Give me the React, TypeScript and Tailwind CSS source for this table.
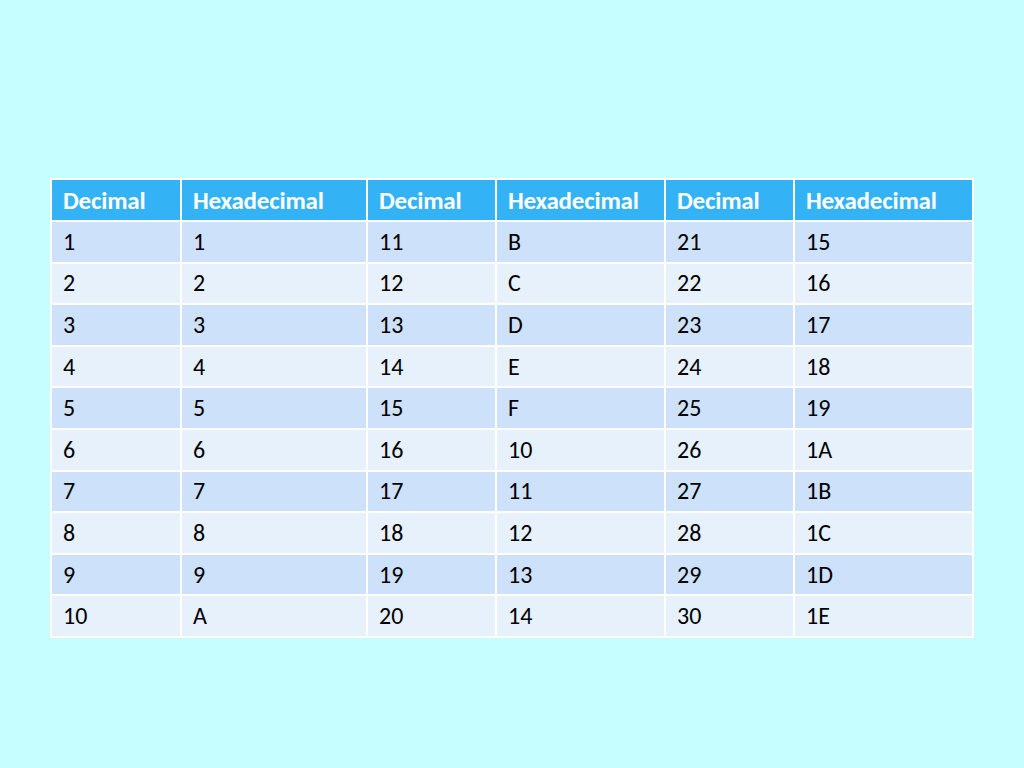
import React from 'react';

const rows: string[][] = [
  ['1', '1', '11', 'B', '21', '15'],
  ['2', '2', '12', 'C', '22', '16'],
  ['3', '3', '13', 'D', '23', '17'],
  ['4', '4', '14', 'E', '24', '18'],
  ['5', '5', '15', 'F', '25', '19'],
  ['6', '6', '16', '10', '26', '1A'],
  ['7', '7', '17', '11', '27', '1B'],
  ['8', '8', '18', '12', '28', '1C'],
  ['9', '9', '19', '13', '29', '1D'],
  ['10', 'A', '20', '14', '30', '1E'],
];

const headers = ['Decimal', 'Hexadecimal', 'Decimal', 'Hexadecimal', 'Decimal', 'Hexadecimal'];

export default function App() {
  return (
    <div className="w-[1024px] h-[768px] bg-[#c6fdfe] pt-[178px] pl-[50px] font-['Carlito','Lato',sans-serif]">
      <table className="border-collapse border-2 border-white/70 table-fixed w-[922px]">
        <colgroup>
          <col className="w-[130px]" />
          <col className="w-[186px]" />
          <col className="w-[129px]" />
          <col className="w-[169px]" />
          <col className="w-[129px]" />
          <col className="w-[179px]" />
        </colgroup>
        <thead>
          <tr className="h-[42px] bg-[#33b3f6]">
            {headers.map((h, i) => (
              <th key={i} className="border-2 border-white text-left pl-[11px] text-white font-bold text-[25px] tracking-[-0.2px] leading-none">
                {h}
              </th>
            ))}
          </tr>
        </thead>
        <tbody>
          {rows.map((r, ri) => (
            <tr key={ri} className={`h-[41.6px] ${ri % 2 === 0 ? 'bg-[#cde2fa]' : 'bg-[#e7f1fc]'}`}>
              {r.map((c, ci) => (
                <td key={ci} className="border-2 border-white text-left pl-[11px] text-black text-[24px] leading-none">
                  {c}
                </td>
              ))}
            </tr>
          ))}
        </tbody>
      </table>
    </div>
  );
}
